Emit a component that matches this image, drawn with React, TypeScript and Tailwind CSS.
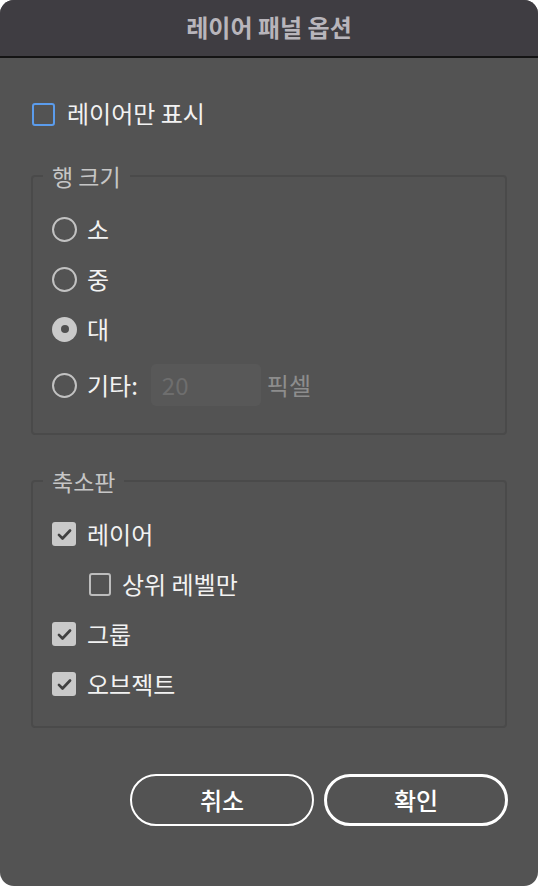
import React from "react";

const font = { fontFamily: '"Noto Sans CJK KR", "Noto Sans", sans-serif' };

const Check = () => (
  <svg viewBox="0 0 24 24" className="w-[19px] h-[19px]">
    <path d="M5 12.5l4.5 4.5L19 7" fill="none" stroke="#404040" strokeWidth="3.4" strokeLinecap="round" strokeLinejoin="round" />
  </svg>
);

const CheckedBox = ({ label }: { label: string }) => (
  <div className="h-[50px] flex items-center">
    <div className="w-[24px] h-[24px] rounded-[3px] bg-[#c9c9c9] flex items-center justify-center">
      <Check />
    </div>
    <span className="ml-[11px] text-[24px] leading-[30px] text-[#f2f2f2]">{label}</span>
  </div>
);

const Radio = ({ label, selected }: { label: string; selected?: boolean }) => (
  <div className="flex items-center">
    {selected ? (
      <div className="w-[25px] h-[25px] rounded-full bg-[#cacaca] flex items-center justify-center">
        <div className="w-[8px] h-[8px] rounded-full bg-[#505050]" />
      </div>
    ) : (
      <div className="w-[25px] h-[25px] rounded-full border-2 border-[#c2c2c2]" />
    )}
    <span className="ml-[10px] text-[24px] leading-[30px] text-[#f2f2f2]">{label}</span>
  </div>
);

export default function App() {
  return (
    <div className="w-[538px] h-[886px] bg-white" style={font}>
      <div className="w-full h-full rounded-[14px] overflow-hidden bg-[#535353] flex flex-col">
        <div className="h-[58px] shrink-0 bg-[#3f3d42] border-b-2 border-[#141414] flex items-center justify-center">
          <span className="text-[24px] font-bold text-[#b8b5bb] leading-none -mt-[3px]">레이어 패널 옵션</span>
        </div>

        <div className="flex flex-col px-[31px] pt-[40px]">
          <div className="h-[32px] flex items-center">
            <div className="ml-[1px] w-[23px] h-[23px] rounded-[3px] border-2 border-[#5b9cec]" />
            <span className="ml-[12px] -mt-[3px] text-[24px] leading-[30px] text-[#f2f2f2]">레이어만 표시</span>
          </div>

          <fieldset className="mt-[32px] border-2 border-[#4a4a4a] rounded-[4px] pl-[10px] pr-[10px] pt-[14px] pb-[17px]">
            <legend className="px-[9px] text-[23px] leading-[28px] text-[#c6c6c6]">행 크기</legend>
            <div className="ml-[9px] flex flex-col">
              <div className="h-[50px] flex items-center"><Radio label="소" /></div>
              <div className="h-[50px] flex items-center"><Radio label="중" /></div>
              <div className="h-[50px] flex items-center"><Radio label="대" selected /></div>
              <div className="h-[62px] flex items-center">
                <Radio label="기타:" />
                <div className="ml-[13px] w-[110px] h-[42px] rounded-[5px] bg-[#585858] flex items-center pl-[11px] text-[24px] text-[#6e6e6e]">
                  20
                </div>
                <span className="ml-[6px] text-[24px] text-[#8d8d8d]">픽셀</span>
              </div>
            </div>
          </fieldset>

          <fieldset className="mt-[32px] border-2 border-[#4a4a4a] rounded-[4px] pl-[10px] pr-[10px] pt-[14px] pb-[17px]">
            <legend className="px-[9px] text-[23px] leading-[28px] text-[#c6c6c6]">축소판</legend>
            <div className="ml-[9px] flex flex-col">
              <CheckedBox label="레이어" />
              <div className="h-[50px] flex items-center pl-[37px]">
                <div className="w-[22px] h-[23px] rounded-[3px] border-2 border-[#bdbdbd]" />
                <span className="ml-[11px] text-[24px] leading-[30px] text-[#f2f2f2]">상위 레벨만</span>
              </div>
              <CheckedBox label="그룹" />
              <CheckedBox label="오브젝트" />
            </div>
          </fieldset>

          <div className="mt-[46px] flex justify-end gap-[10px] -mr-[1px]">
            <button className="w-[184px] h-[52px] rounded-full border-2 border-white text-[24px] text-white font-medium">
              취소
            </button>
            <button className="w-[184px] h-[52px] rounded-full border-[3px] border-white text-[24px] text-white font-medium">
              확인
            </button>
          </div>
        </div>
      </div>
    </div>
  );
}
